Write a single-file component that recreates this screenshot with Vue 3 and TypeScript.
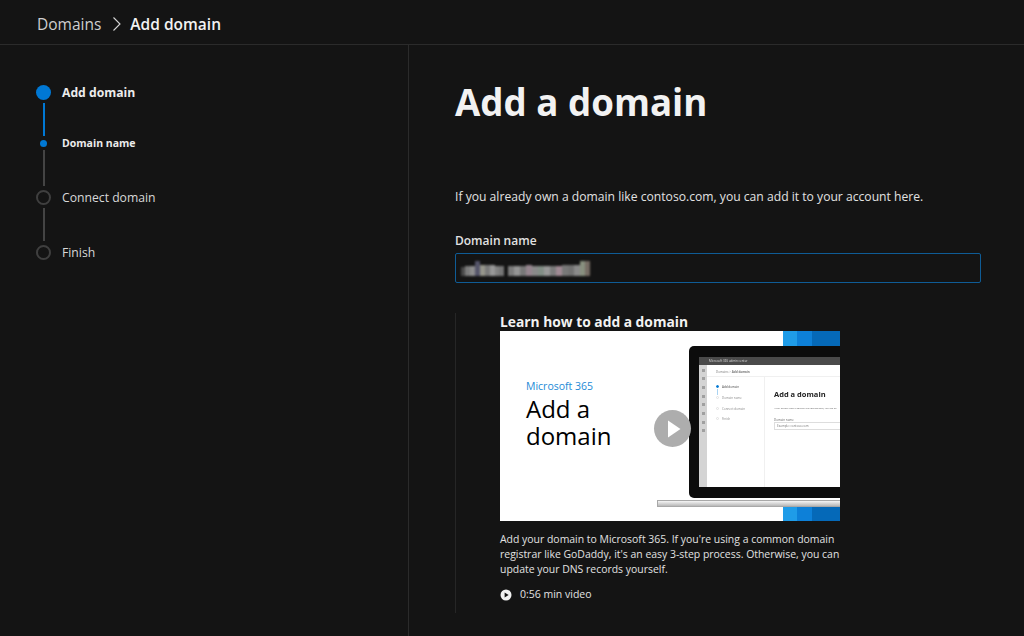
<script setup lang="ts">
const steps = [
  { label: 'Add domain', kind: 'done', line: 'blue' },
  { label: 'Domain name', kind: 'sub', line: 'grey-long' },
  { label: 'Connect domain', kind: 'todo', line: 'grey' },
  { label: 'Finish', kind: 'todo', line: '' },
]

// pixelated mask over the typed domain: [width, height, colour]
const mosaic: [number, number, string][] = [
  [4, 9, '#4a4a4a'], [5, 10, '#7c7c7c'], [5, 10, '#8e8e8e'], [5, 15, '#55556a'], [5, 11, '#96968c'],
  [5, 11, '#7a7a7a'], [5, 11, '#989898'], [4, 10, '#828282'], [5, 10, '#767676'],
  [4, 4, '#141414'],
  [6, 10, '#7c7c7c'], [6, 10, '#959595'], [6, 10, '#787878'], [6, 11, '#96858f'], [6, 10, '#8a8a8a'],
  [6, 10, '#828e86'], [6, 10, '#989898'], [6, 10, '#7c7c7c'], [6, 10, '#a08a94'], [6, 11, '#787878'],
  [6, 11, '#727272'], [6, 11, '#8a8a8a'], [5, 15, '#88907f'], [5, 15, '#766c64'],
]

const railIcons = [0, 1, 2, 3, 4, 5, 6, 7]
</script>

<template>
  <div class="page">
    <header class="crumbs">
      <span class="crumb">Domains</span>
      <svg class="chevron" width="10" height="16" viewBox="0 0 10 16">
        <path d="M1.5 1.5 8 8l-6.5 6.5" fill="none" stroke="#d6d6d6" stroke-width="1.1" />
      </svg>
      <span class="crumb current">Add domain</span>
    </header>

    <div class="body">
      <aside class="sidebar">
        <template v-for="step in steps" :key="step.label">
          <div class="step" :class="step.kind">
            <span class="marker"><i class="dot"></i></span>
            <span class="step-label">{{ step.label }}</span>
          </div>
          <div v-if="step.line" class="connector" :class="step.line"></div>
        </template>
      </aside>

      <main class="content">
        <h1>Add a domain</h1>
        <p class="lead">If you already own a domain like contoso.com, you can add it to your account here.</p>

        <label class="field-label">Domain name</label>
        <div class="input">
          <span class="mosaic">
            <i
              v-for="(cell, i) in mosaic"
              :key="i"
              :style="{ width: cell[0] + 'px', height: cell[1] + 'px', background: cell[2] }"
            ></i>
          </span>
        </div>

        <section class="video">
          <h2>Learn how to add a domain</h2>
          <div class="thumb">
            <div class="thumb-text">
              <div class="brand">Microsoft 365</div>
              <div class="thumb-title">Add a<br />domain</div>
            </div>

            <div class="band top"><i></i><i></i><i></i></div>
            <div class="band bottom"><i></i><i></i><i></i></div>

            <div class="laptop-base"></div>
            <div class="laptop">
              <div class="screen">
                <div class="screen-top"><span>Microsoft 365 admin center</span></div>
                <div class="screen-body">
                  <div class="screen-rail">
                    <i v-for="n in railIcons" :key="n"></i>
                  </div>
                  <div class="screen-main">
                    <div class="screen-crumbs">Domains &gt; <b>Add domain</b></div>
                    <div class="screen-cols">
                      <div class="screen-steps">
                        <span class="on">Add domain</span>
                        <span>Domain name</span>
                        <span>Connect domain</span>
                        <span>Finish</span>
                      </div>
                      <div class="screen-form">
                        <div class="screen-title">Add a domain</div>
                        <div class="screen-lead">If you already own a domain like contoso.com, you can ad</div>
                        <div class="screen-name">Domain name</div>
                        <div class="screen-input">Example: contoso.com</div>
                      </div>
                    </div>
                  </div>
                </div>
              </div>
            </div>

            <div class="play">
              <svg width="14" height="18" viewBox="0 0 14 18"><path d="M1 .5 13.5 9 1 17.5z" fill="#fff" /></svg>
            </div>
          </div>

          <p class="desc">Add your domain to Microsoft 365. If you're using a common domain registrar like GoDaddy, it's an easy 3-step process. Otherwise, you can update your DNS records yourself.</p>

          <div class="duration">
            <svg width="12" height="12" viewBox="0 0 12 12">
              <circle cx="6" cy="6" r="5.5" fill="#f2f2f2" />
              <path d="M4.6 3.4 8.6 6l-4 2.6z" fill="#141414" />
            </svg>
            <span>0:56 min video</span>
          </div>
        </section>
      </main>
    </div>
  </div>
</template>

<style>
html, body {
  margin: 0;
  background: #141414;
}
</style>

<style scoped>
.page {
  width: 1024px;
  height: 636px;
  overflow: hidden;
  display: flex;
  flex-direction: column;
  background: #141414;
  color: #f0f0f0;
  font-family: "Open Sans", "Noto Sans", sans-serif;
}

.crumbs {
  height: 45px;
  box-sizing: border-box;
  flex: none;
  display: flex;
  align-items: center;
  padding: 3px 0 0 37px;
  border-bottom: 1px solid #2b2b2b;
}

.crumb {
  font-size: 15.5px;
  color: #cfcfcf;
}

.crumb.current {
  font-weight: 600;
  color: #f2f2f2;
}

.chevron {
  margin: 0 8px 0 11px;
}

.body {
  flex: 1;
  display: flex;
  min-height: 0;
}

.sidebar {
  width: 409px;
  box-sizing: border-box;
  flex: none;
  border-right: 1px solid #2b2b2b;
  padding: 39px 0 0 36px;
}

.step {
  display: flex;
  align-items: center;
  height: 16px;
}

.step.sub {
  height: 8px;
}

.marker {
  width: 15px;
  flex: none;
  display: flex;
  justify-content: center;
  margin-right: 11px;
}

.dot {
  display: block;
  box-sizing: border-box;
  width: 15px;
  height: 15px;
  border-radius: 50%;
}

.done .dot {
  background: #0078d4;
}

.sub .dot {
  width: 7px;
  height: 7px;
  background: #0078d4;
}

.todo .dot {
  border: 2px solid #3f3f3f;
}

.step-label {
  font-size: 12.2px;
  white-space: nowrap;
  color: #d8d8d8;
}

.done .step-label,
.sub .step-label {
  font-weight: 700;
  color: #ececec;
}

.sub .step-label {
  font-size: 10.5px;
}

.connector {
  width: 2px;
  margin: 3px 0 3px 7px;
  height: 33px;
  background: #444444;
}

.connector.blue {
  background: #0078d4;
}

.connector.grey-long {
  height: 36px;
}

.content {
  flex: 1;
  min-width: 0;
  padding: 0 43px 0 46px;
}

h1 {
  margin: 31px 0 0;
  font-size: 36.7px;
  line-height: 52px;
  font-weight: 700;
  color: #f2f2f2;
}

.lead {
  margin: 59px 0 0;
  font-size: 12.15px;
  line-height: 20px;
  color: #e2e2e2;
}

.field-label {
  display: block;
  margin-top: 24px;
  font-size: 12px;
  line-height: 20px;
  font-weight: 600;
  color: #e2e2e2;
}

.input {
  margin-top: 2px;
  height: 30px;
  box-sizing: border-box;
  border: 1px solid #0f5c96;
  border-radius: 2px;
  display: flex;
  align-items: center;
  padding-left: 5px;
}

.mosaic {
  display: flex;
  align-items: flex-end;
  height: 15px;
  filter: blur(0.8px);
}

.mosaic i {
  display: block;
}

.video {
  margin-top: 30px;
  border-left: 1px solid #262626;
  padding-left: 44px;
  height: 300px;
}

h2 {
  margin: 0;
  font-size: 13.8px;
  line-height: 18px;
  font-weight: 700;
  color: #f2f2f2;
}

.thumb {
  position: relative;
  width: 340px;
  height: 190px;
  background: #ffffff;
  overflow: hidden;
}

.thumb-text {
  position: absolute;
  left: 26px;
  top: 48px;
  color: #000000;
}

.brand {
  font-size: 10.5px;
  line-height: 14px;
  color: #1c8ad6;
}

.thumb-title {
  margin-top: 2px;
  font-size: 24px;
  line-height: 27px;
  font-weight: 500;
}

.band {
  position: absolute;
  left: 283px;
  width: 57px;
  height: 15px;
  display: grid;
  grid-template-columns: 14px 15px 28px;
}

.band.top { top: 0; }
.band.bottom { bottom: 0; }
.band i:nth-child(1) { background: #1f9ce8; }
.band i:nth-child(2) { background: #0d80d8; }
.band i:nth-child(3) { background: #0569b8; }

.laptop {
  position: absolute;
  left: 189px;
  top: 15px;
  width: 170px;
  height: 152px;
  box-sizing: border-box;
  background: #0c0c0c;
  border-radius: 5px;
  padding: 11px 0 11px 10px;
}

.laptop-base {
  position: absolute;
  left: 157px;
  top: 169px;
  width: 200px;
  height: 7px;
  background: linear-gradient(#f5f5f5, #b8b8b8);
  border: 1px solid #a8a8a8;
  box-sizing: border-box;
}

.screen {
  height: 100%;
  background: #ffffff;
  display: flex;
  flex-direction: column;
  overflow: hidden;
  filter: blur(0.35px);
}

.screen-top {
  height: 8px;
  flex: none;
  background: #4a4a4a;
  color: #dddddd;
  font-size: 3px;
  display: flex;
  align-items: center;
  padding-left: 10px;
  white-space: nowrap;
}

.screen-body {
  flex: 1;
  display: flex;
  min-height: 0;
}

.screen-rail {
  width: 8px;
  flex: none;
  background: #d4d4d4;
  display: flex;
  flex-direction: column;
  align-items: center;
  gap: 5.7px;
  padding-top: 3.5px;
}

.screen-rail i {
  width: 3px;
  height: 3px;
  background: #a0a0a0;
}

.screen-main {
  flex: 1;
  min-width: 0;
  display: flex;
  flex-direction: column;
}

.screen-crumbs {
  height: 12px;
  box-sizing: border-box;
  font-size: 3px;
  line-height: 14px;
  padding-left: 9px;
  color: #777777;
  border-bottom: 1px solid #f0f0f0;
  white-space: nowrap;
}

.screen-cols {
  flex: 1;
  display: flex;
}

.screen-steps {
  width: 58px;
  flex: none;
  border-right: 1px solid #f0f0f0;
  padding: 8px 0 0 15px;
  box-sizing: border-box;
  display: flex;
  flex-direction: column;
  gap: 6.8px;
  font-size: 3px;
  line-height: 4px;
  color: #888888;
  white-space: nowrap;
}

.screen-steps span {
  position: relative;
}

.screen-steps span::before {
  content: "";
  position: absolute;
  left: -6px;
  top: 0;
  width: 3px;
  height: 3px;
  box-sizing: border-box;
  border-radius: 50%;
  border: 1px solid #e2e2e2;
}

.screen-steps .on {
  color: #444444;
}

.screen-steps .on::before {
  background: #0078d4;
  border-color: #0078d4;
}

.screen-steps .on::after {
  content: "";
  position: absolute;
  left: -5px;
  top: 4px;
  width: 1px;
  height: 6px;
  background: #a9d3f2;
}

.screen-form {
  padding: 12px 0 0 9px;
  white-space: nowrap;
  min-width: 0;
}

.screen-title {
  font-size: 7.5px;
  line-height: 10px;
  font-weight: 700;
  color: #222222;
}

.screen-lead {
  margin-top: 7px;
  font-size: 2.35px;
  line-height: 4px;
  color: #666666;
}

.screen-name {
  margin-top: 8px;
  font-size: 3px;
  line-height: 4px;
  color: #666666;
}

.screen-input {
  width: 90px;
  height: 6px;
  font-size: 3px;
  line-height: 6px;
  padding-left: 2px;
  color: #777777;
  border: 1px solid #dddddd;
}

.play {
  position: absolute;
  left: 154px;
  top: 79px;
  width: 37px;
  height: 37px;
  border-radius: 50%;
  background: #adadad;
  display: flex;
  align-items: center;
  justify-content: center;
  padding-left: 3px;
  box-sizing: border-box;
}

.desc {
  margin: 11px 0 0;
  width: 340px;
  font-size: 10.45px;
  line-height: 15px;
  color: #e2e2e2;
}

.duration {
  margin-top: 10px;
  display: flex;
  align-items: center;
  gap: 8px;
  font-size: 10.5px;
  line-height: 15px;
  color: #e2e2e2;
}
</style>
